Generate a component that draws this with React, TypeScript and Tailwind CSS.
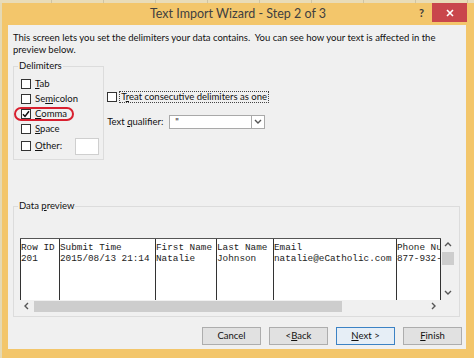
import React from 'react';

const ui = "font-['Lato','Noto_Sans',sans-serif]";

const U = ({ children }: { children: React.ReactNode }) => (
  <span className="underline underline-offset-[1px]">{children}</span>
);

const Box = ({ checked }: { checked?: boolean }) => (
  <span className="w-[10px] h-[10px] shrink-0 border border-[#333] bg-white flex items-center justify-center">
    {checked && (
      <svg width="8" height="8" viewBox="0 0 8 8">
        <path d="M1 4.2 L3 6.4 L7 1.2" stroke="#111" strokeWidth="1.5" fill="none" />
      </svg>
    )}
  </span>
);

const Chevron = ({ dir }: { dir: 'up' | 'down' | 'left' | 'right' }) => {
  const d = {
    up: 'M1 5 L4 2 L7 5',
    down: 'M1 2 L4 5 L7 2',
    left: 'M5 1 L2 4 L5 7',
    right: 'M2 1 L5 4 L2 7',
  }[dir];
  return (
    <svg width="8" height="8" viewBox="0 0 8 8">
      <path d={d} stroke="#555" strokeWidth="1.4" fill="none" />
    </svg>
  );
};

const columns = [
  { w: 39, head: 'Row ID', val: '201' },
  { w: 96, head: 'Submit Time', val: '2015/08/13 21:14' },
  { w: 61, head: 'First Name', val: 'Natalie' },
  { w: 57, head: 'Last Name', val: 'Johnson' },
  { w: 123, head: 'Email', val: 'natalie@eCatholic.com' },
  { w: 45, head: 'Phone Number', val: '877-932-4390' },
];

const delimiters: { label: React.ReactNode; checked?: boolean }[] = [
  { label: <><U>T</U>ab</> },
  { label: <>Se<U>m</U>icolon</> },
  { label: <><U>C</U>omma</>, checked: true },
  { label: <><U>S</U>pace</> },
];

export default function App() {
  return (
    <div className={`w-[474px] h-[358px] overflow-hidden flex flex-col bg-[#e9dcb8] text-[#111] ${ui}`}>
      {/* spreadsheet peeking behind the dialog */}
      <div className="h-[3px] flex shrink-0">
        {Array.from({ length: 9 }).map((_, i) => (
          <div key={i} className="w-[52px] h-full border-r border-[#cfc4a4]" />
        ))}
      </div>

      <div className="flex flex-1">
        <div className="w-[2px] bg-[#e5d9b4]" />

        {/* dialog */}
        <div className="flex-1 flex flex-col bg-[#f3c66b]">
          {/* title bar */}
          <div className="h-[22px] relative flex items-center justify-center shrink-0">
            <span className="text-[12.5px] text-[#404040] leading-none">Text Import Wizard - Step 2 of 3</span>
            <span className="absolute right-[50px] top-[2px] text-[11px] font-bold text-[#3a3a3a]">?</span>
            <div className="absolute right-[7px] top-0 w-[35px] h-[19px] bg-[#c9464c] flex items-center justify-center">
              <svg width="8" height="8" viewBox="0 0 8 8">
                <path d="M1 1 L7 7 M7 1 L1 7" stroke="#fff" strokeWidth="1.6" />
              </svg>
            </div>
          </div>

          {/* body */}
          <div className="ml-[6px] mr-[8px] mb-[9px] flex-1 bg-[#f0f0f0] flex flex-col text-[9.5px] leading-[12px]">
            <p className="pl-[5px] pt-[7px] pr-[20px]">
              This screen lets you set the delimiters your data contains.&nbsp; You can see how your text is affected in the preview below.
            </p>

            <div className="flex mt-[4px] pl-[5px]">
              <fieldset className="w-[88px] h-[100px] border border-[#dcdcdc] pl-[7px] pr-[4px]">
                <legend className="px-[1px] ml-[-3px]">Delimiters</legend>
                <div className="pt-[4px] flex flex-col">
                  {delimiters.map((d, i) => (
                    <div key={i} className="relative h-[15px] flex items-center gap-[4px]">
                      <Box checked={d.checked} />
                      <span>{d.label}</span>
                      {d.checked && (
                        <span className="absolute left-[-7px] top-[1px] w-[60px] h-[14px] rounded-full border-2 border-[#d8202f]" />
                      )}
                    </div>
                  ))}
                  <div className="h-[18px] mt-[1px] flex items-center gap-[4px]">
                    <Box />
                    <span>
                      <U>O</U>ther:
                    </span>
                    <span className="ml-[9px] w-[24px] h-[17px] bg-white border border-[#cfcfcf]" />
                  </div>
                </div>
              </fieldset>

              <div className="ml-[3px] pt-[30px] flex flex-col">
                <div className="h-[14px] flex items-center gap-[2px]">
                  <Box />
                  <span className="border border-dotted border-[#444] px-[1px] leading-[10px] whitespace-nowrap">
                    T<U>r</U>eat consecutive delimiters as one
                  </span>
                </div>
                <div className="h-[14px] mt-[11px] flex items-center">
                  <span className="w-[62px]">
                    Text <U>q</U>ualifier:
                  </span>
                  <div className="w-[96px] h-[14px] bg-white border border-[#a9a9a9] flex">
                    <span className="flex-1 pl-[5px] leading-[12px]">"</span>
                    <span className="w-[13px] border-l border-[#a9a9a9] flex items-center justify-center">
                      <Chevron dir="down" />
                    </span>
                  </div>
                </div>
              </div>
            </div>

            {/* data preview */}
            <fieldset className="mt-[40px] ml-[5px] w-[447px] h-[117px] border border-[#dcdcdc] pl-[6px]">
              <legend className="px-[1px] ml-[-2px]">
                Data <U>p</U>review
              </legend>
              <div className="mt-[26px] w-[435px]">
                <div className="flex h-[62px]">
                  <div className="w-[421px] bg-white border-t border-[#555] flex font-['Liberation_Mono',monospace] text-[9.33px] leading-[11px] text-[#222]">
                    {columns.map((c, i) => (
                      <div
                        key={c.head}
                        className={`h-full border-l border-[#333] pt-[3px] overflow-hidden whitespace-pre ${i === columns.length - 1 ? 'border-r' : ''}`}
                        style={{ width: c.w }}
                      >
                        <div>{c.head}</div>
                        <div>{c.val}</div>
                      </div>
                    ))}
                  </div>
                  <div className="w-[14px] flex flex-col items-center bg-[#f0f0f0]">
                    <div className="h-[14px] flex items-center">
                      <Chevron dir="up" />
                    </div>
                    <div className="w-[12px] h-[13px] bg-[#cdcdcd]" />
                    <div className="flex-1" />
                    <div className="h-[14px] flex items-center">
                      <Chevron dir="down" />
                    </div>
                  </div>
                </div>
                <div className="flex h-[12px]">
                  <div className="w-[421px] flex items-center bg-[#f0f0f0]">
                    <div className="w-[14px] flex justify-center">
                      <Chevron dir="left" />
                    </div>
                    <div className="w-[308px] h-[11px] bg-[#cdcdcd]" />
                    <div className="flex-1" />
                    <div className="w-[14px] flex justify-center">
                      <Chevron dir="right" />
                    </div>
                  </div>
                </div>
              </div>
            </fieldset>

            {/* buttons */}
            <div className="mt-[10px] pr-[4px] flex justify-end gap-[8px]">
              {[
                { l: <>Cancel</> },
                { l: <>&lt; <U>B</U>ack</> },
                { l: <><U>N</U>ext &gt;</>, focus: true },
                { l: <><U>F</U>inish</> },
              ].map((b, i) => (
                <button
                  key={i}
                  className={`w-[59px] h-[18px] border flex items-center justify-center ${
                    b.focus ? 'border-[#3c82c4] bg-[#e6eef6]' : 'border-[#adadad] bg-[#e1e1e1]'
                  }`}
                >
                  {b.l}
                </button>
              ))}
            </div>
          </div>
        </div>
      </div>
    </div>
  );
}
